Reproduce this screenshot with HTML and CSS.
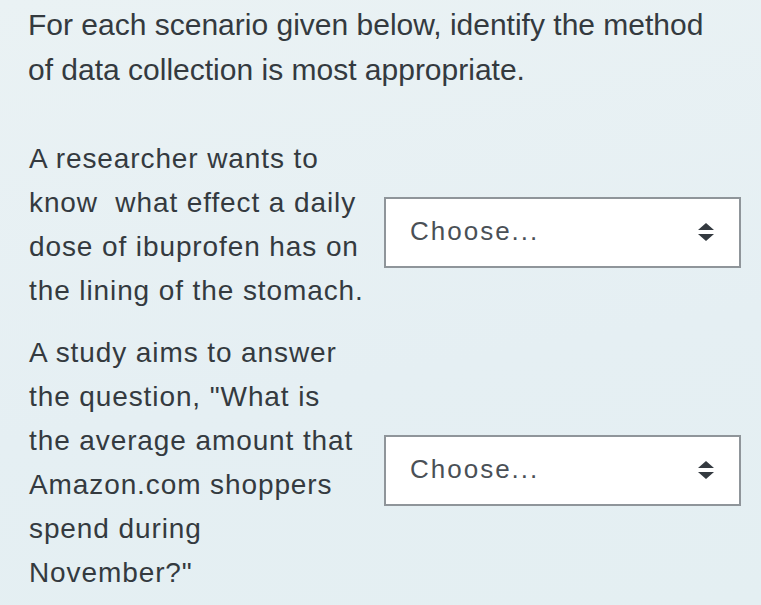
FILE: index.html
```html
<!DOCTYPE html>
<html lang="en">
<head>
<meta charset="utf-8">
<title>Match question</title>
<link rel="stylesheet" href="styles.css">
</head>
<body>
<main class="page">
  <p class="intro">For each scenario given below, identify the method of data collection is most appropriate.</p>
  <div class="rows">
    <div class="row">
      <div class="prompt">A researcher wants to know&nbsp; what effect a daily dose of ibuprofen has on the lining of the stomach.</div>
      <div class="select">
        <span class="select-label">Choose...</span>
        <svg class="select-arrow" width="16" height="18" viewBox="0 0 16 18"><path d="M8 0 L16 7 L0 7 Z M0 11 L16 11 L8 18 Z" fill="#343a40"/></svg>
      </div>
    </div>
    <div class="row">
      <div class="prompt">A study aims to answer the question, "What is the average amount that Amazon.com shoppers spend during November?"</div>
      <div class="select">
        <span class="select-label">Choose...</span>
        <svg class="select-arrow" width="16" height="18" viewBox="0 0 16 18"><path d="M8 0 L16 7 L0 7 Z M0 11 L16 11 L8 18 Z" fill="#343a40"/></svg>
      </div>
    </div>
  </div>
</main>
</body>
</html>
```
FILE: styles.css
```css
html, body {
  margin: 0;
  padding: 0;
}
body {
  width: 761px;
  height: 605px;
  overflow: hidden;
  background: linear-gradient(170deg, #eaf2f4 0%, #e5eff3 60%, #e4eff2 100%);
  font-family: "Liberation Sans", Arial, Helvetica, sans-serif;
  color: #343a3f;
}
.page {
  padding: 2px 0 0 28px;
}
.intro {
  margin: 0;
  font-size: 30px;
  line-height: 45px;
  width: 700px;
}
.rows {
  margin-top: 45px;
  display: flex;
  flex-direction: column;
  gap: 18px;
}
.row {
  display: grid;
  grid-template-columns: 356px 357px;
  align-items: center;
}
.prompt {
  padding-left: 1px;
  width: 338px;
  font-size: 28px;
  line-height: 44px;
  letter-spacing: 0.9px;
}
.select {
  box-sizing: border-box;
  height: 71px;
  margin-top: 14px;
  border: 2px solid #8f959a;
  background: #ffffff;
  display: flex;
  align-items: center;
  justify-content: space-between;
  padding: 0 25px 0 24px;
}
.select-label {
  font-size: 26px;
  letter-spacing: 2px;
  color: #4a5056;
  margin-top: -2px;
}
.select-arrow {
  display: block;
}
```
